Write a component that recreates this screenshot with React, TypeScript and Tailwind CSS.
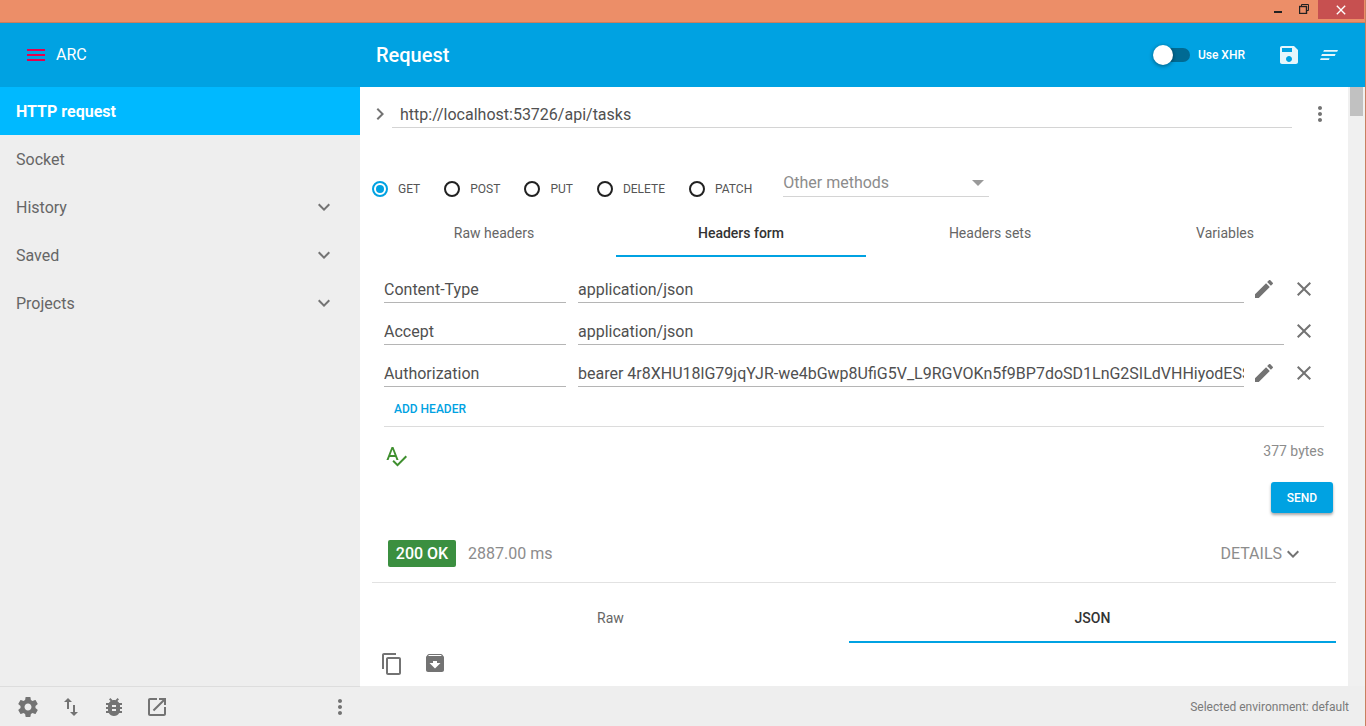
import React from "react";

const P = {
  save: "M17 3H5c-1.11 0-2 .9-2 2v14c0 1.1.89 2 2 2h14c1.1 0 2-.9 2-2V7l-4-4zm-5 16c-1.66 0-3-1.34-3-3s1.34-3 3-3 3 1.34 3 3-1.34 3-3 3zm3-10H5V5h10v4z",
  more: "M12 8c1.1 0 2-.9 2-2s-.9-2-2-2-2 .9-2 2 .9 2 2 2zm0 2c-1.1 0-2 .9-2 2s.9 2 2 2 2-.9 2-2-.9-2-2-2zm0 6c-1.1 0-2 .9-2 2s.9 2 2 2 2-.9 2-2-.9-2-2-2z",
  right: "M10 6L8.59 7.41 13.17 12l-4.58 4.59L10 18l6-6z",
  down: "M16.59 8.59L12 13.17 7.41 8.59 6 10l6 6 6-6z",
  edit: "M3 17.25V21h3.75L17.81 9.94l-3.75-3.75L3 17.25zM20.71 7.04c.39-.39.39-1.02 0-1.41l-2.34-2.34c-.39-.39-1.02-.39-1.41 0l-1.83 1.83 3.75 3.75 1.83-1.83z",
  close: "M19 6.41L17.59 5 12 10.59 6.41 5 5 6.41 10.59 12 5 17.59 6.41 19 12 13.41 17.59 19 19 17.59 13.41 12z",
  spell: "M12.45 16h2.09L9.43 3H7.57L2.46 16h2.09l1.12-3h5.64l1.14 3zm-6.02-5L8.5 5.48 10.57 11H6.43zm15.16.59l-8.09 8.09L9.83 16l-1.41 1.41 5.09 5.09L23 13l-1.41-1.41z",
  gear: "M19.43 12.98c.04-.32.07-.64.07-.98s-.03-.66-.07-.98l2.11-1.65c.19-.15.24-.42.12-.64l-2-3.46c-.12-.22-.39-.3-.61-.22l-2.49 1c-.52-.4-1.08-.73-1.69-.98l-.38-2.65C14.46 2.18 14.25 2 14 2h-4c-.25 0-.46.18-.49.42l-.38 2.65c-.61.25-1.17.59-1.69.98l-2.49-1c-.23-.09-.49 0-.61.22l-2 3.46c-.13.22-.07.49.12.64l2.11 1.65c-.04.32-.07.65-.07.98s.03.66.07.98l-2.11 1.65c-.19.15-.24.42-.12.64l2 3.46c.12.22.39.3.61.22l2.49-1c.52.4 1.08.73 1.69.98l.38 2.65c.03.24.24.42.49.42h4c.25 0 .46-.18.49-.42l.38-2.65c.61-.25 1.17-.59 1.69-.98l2.49 1c.23.09.49 0 .61-.22l2-3.46c.12-.22.07-.49-.12-.64l-2.11-1.65zM12 15.5c-1.93 0-3.5-1.57-3.5-3.5s1.57-3.5 3.5-3.5 3.5 1.57 3.5 3.5-1.57 3.5-3.5 3.5z",
  swap: "M16 17.01V10h-2v7.01h-3L15 21l4-3.99h-3zM9 3L5 6.99h3V14h2V6.99h3L9 3z",
  bug: "M20 8h-2.81c-.45-.78-1.07-1.45-1.82-1.96L17 4.41 15.59 3l-2.17 2.17C12.96 5.06 12.49 5 12 5c-.49 0-.96.06-1.41.17L8.41 3 7 4.41l1.62 1.63C7.88 6.55 7.26 7.22 6.81 8H4v2h2.09c-.05.33-.09.66-.09 1v1H4v2h2v1c0 .34.04.67.09 1H4v2h2.81c1.04 1.79 2.97 3 5.19 3s4.15-1.21 5.19-3H20v-2h-2.09c.05-.33.09-.66.09-1v-1h2v-2h-2v-1c0-.34-.04-.67-.09-1H20V8zm-6 8h-4v-2h4v2zm0-4h-4v-2h4v2z",
  open: "M19 19H5V5h7V3H5c-1.11 0-2 .9-2 2v14c0 1.1.89 2 2 2h14c1.1 0 2-.9 2-2v-7h-2v7zM14 3v2h3.59l-9.83 9.83 1.41 1.41L19 6.41V10h2V3h-7z",
  copy: "M16 1H4c-1.1 0-2 .9-2 2v14h2V3h12V1zm3 4H8c-1.1 0-2 .9-2 2v14c0 1.1.9 2 2 2h11c1.1 0 2-.9 2-2V7c0-1.1-.9-2-2-2zm0 16H8V7h11v14z",
  archive: "M20.54 5.23l-1.39-1.68C18.88 3.21 18.47 3 18 3H6c-.47 0-.88.21-1.16.55L3.46 5.23C3.17 5.57 3 6.02 3 6.5V19c0 1.1.9 2 2 2h14c1.1 0 2-.9 2-2V6.5c0-.48-.17-.93-.46-1.27zM12 17.5L6.5 12H10v-2h4v2h3.5L12 17.5zM5.12 5l.81-1h12l.94 1H5.12z",
};

function Icon({ d, className }: { d: string; className: string }) {
  return (
    <svg viewBox="0 0 24 24" className={className} fill="currentColor" aria-hidden="true">
      <path d={d} />
    </svg>
  );
}

function NavRow({ label, expand }: { label: string; expand?: boolean }) {
  return (
    <div className="h-12 flex items-center justify-between pl-4 pr-6 text-[16px] text-[#666666]">
      <span className="pt-[1px]">{label}</span>
      {expand && <Icon d={P.down} className="w-6 h-6 text-[#737373]" />}
    </div>
  );
}

function Radio({ label, checked }: { label: string; checked?: boolean }) {
  return (
    <div className="flex items-center gap-[10px]">
      {checked ? (
        <span className="w-4 h-4 rounded-full border-2 border-[#00a2e2] flex items-center justify-center">
          <span className="w-2 h-2 rounded-full bg-[#00a2e2]" />
        </span>
      ) : (
        <span className="w-4 h-4 rounded-full border-2 border-[#212121]" />
      )}
      <span className="text-[12px] text-[#555555]">{label}</span>
    </div>
  );
}

function Field({ text, widthClass }: { text: string; widthClass: string }) {
  return (
    <div className={`${widthClass} h-[28px] border-b border-[#b5b5b5] text-[16px] leading-[29px] text-[#505050] overflow-hidden whitespace-nowrap`}>
      {text}
    </div>
  );
}

function HeaderRow({ name, value, edit }: { name: string; value: string; edit?: boolean }) {
  return (
    <div className="h-[42px] w-[952px] flex items-center pl-3">
      <Field text={name} widthClass="w-[182px]" />
      <Field text={value} widthClass={edit ? "ml-3 w-[666px]" : "ml-3 w-[706px]"} />
      {edit && (
        <div className="w-10 flex justify-center">
          <Icon d={P.edit} className="w-6 h-6 text-[#737373]" />
        </div>
      )}
      <div className="w-10 flex justify-center">
        <Icon d={P.close} className="w-6 h-6 text-[#737373]" />
      </div>
    </div>
  );
}

export default function App() {
  return (
    <div className="w-full h-[726px] flex flex-col overflow-hidden border-r border-[#c9805f] bg-white font-['Roboto',sans-serif]">
      {/* window chrome */}
      <div className="h-[23px] shrink-0 bg-[#ec8e68] border-b border-[#c97d5e] flex justify-end items-start">
        <span className="w-2 h-[2px] mt-[11px] mr-[17px] bg-[#222222]" />
        <svg viewBox="0 0 10 10" className="w-[10px] h-[10px] mt-1 mr-[9px]" fill="none" stroke="#222222" strokeWidth="1">
          <path d="M2.5 2.5V.5h7v6h-2" />
          <rect x=".5" y="2.5" width="7" height="7" strokeWidth="1.4" />
        </svg>
        <div className="w-[46px] h-[19px] mr-[1px] bg-[#c75050] flex items-center justify-center">
          <Icon d={P.close} className="w-4 h-4 text-white" />
        </div>
      </div>

      {/* app header */}
      <div className="h-16 shrink-0 bg-[#00a2e2] flex text-white">
        <div className="w-[360px] flex items-center pl-[27px]">
          <svg viewBox="0 0 18 12" className="w-[18px] h-3 text-[#e6004d]" fill="currentColor" aria-hidden="true">
            <rect x="0" y="0" width="18" height="2" />
            <rect x="0" y="5" width="18" height="2" />
            <rect x="0" y="10" width="18" height="2" />
          </svg>
          <span className="ml-[11px] text-[16px]">ARC</span>
        </div>
        <div className="flex-1 flex items-center pl-4">
          <span className="text-[20px] font-medium">Request</span>
          <div className="ml-auto flex items-center">
            <div className="relative w-9 h-[14px] rounded-full bg-[#006a93]">
              <span className="absolute -left-[1px] -top-[3px] w-5 h-5 rounded-full bg-white shadow-[0_1px_4px_rgba(0,0,0,0.45)]" />
            </div>
            <span className="ml-2 text-[12px] font-medium">Use XHR</span>
            <Icon d={P.save} className="ml-8 w-6 h-6 text-[#e6f6fc]" />
            <svg viewBox="0 0 18 10" className="ml-[19px] mr-[27px] w-[18px] h-[10px]" fill="#e6f6fc" aria-hidden="true">
              <path d="M4 0H18l-.8 1.8H3.2zM2 4.1H15.6l-.8 1.8H1.2zM.8 8.2H9.6l-.6 1.8H0z" />
            </svg>
          </div>
        </div>
      </div>

      <div className="flex-1 min-h-0 flex">
        {/* sidebar */}
        <aside className="w-[360px] shrink-0 bg-[#eeeeee]">
          <div className="h-12 flex items-center pl-4 pt-[1px] bg-[#00b9ff] text-white text-[16px] font-bold">HTTP request</div>
          <NavRow label="Socket" />
          <NavRow label="History" expand />
          <NavRow label="Saved" expand />
          <NavRow label="Projects" expand />
        </aside>

        {/* main */}
        <main className="flex-1 min-w-0 overflow-hidden pl-3">
          {/* url row */}
          <div className="h-[54px] flex items-center">
            <Icon d={P.right} className="w-6 h-6 -ml-1 text-[#737373]" />
            <div className="w-[900px] h-[26px] mt-[2px] border-b border-[#d4d4d4] pl-2 text-[16px] leading-[26px] text-[#505050]">
              http://localhost:53726/api/tasks
            </div>
            <Icon d={P.more} className="ml-4 w-6 h-6 text-[#737373]" />
          </div>

          {/* methods */}
          <div className="mt-8 h-8 flex items-start">
            <div className="flex items-center gap-6 h-8">
              <Radio label="GET" checked />
              <Radio label="POST" />
              <Radio label="PUT" />
              <Radio label="DELETE" />
              <Radio label="PATCH" />
            </div>
            <div className="ml-[31px] w-[206px] h-[28px] -mt-1 border-b border-[#d4d4d4] flex items-center justify-between text-[16px] text-[#8c8c8c]">
              <span>Other methods</span>
              <svg viewBox="0 0 12 6" className="w-3 h-[6px] mr-[5px]" fill="#9a9a9a" aria-hidden="true">
                <path d="M0 0h12L6 6z" />
              </svg>
            </div>
          </div>

          {/* header tabs */}
          <div className="mt-1 h-12 w-[964px] flex text-[14px] text-[#666666]">
            <div className="w-[244px] flex items-center justify-center pt-[2px] border-b-2 border-transparent">Raw headers</div>
            <div className="w-[250px] flex items-center justify-center pt-[2px] border-b-2 border-[#00a2e2] font-medium text-[#333333]">Headers form</div>
            <div className="w-[248px] flex items-center justify-center pt-[2px] border-b-2 border-transparent">Headers sets</div>
            <div className="w-[222px] flex items-center justify-center pt-[2px] border-b-2 border-transparent">Variables</div>
          </div>

          {/* header form */}
          <div className="mt-[11px]">
            <HeaderRow name="Content-Type" value="application/json" edit />
            <HeaderRow name="Accept" value="application/json" />
            <HeaderRow name="Authorization" value="bearer 4r8XHU18lG79jqYJR-we4bGwp8UfiG5V_L9RGVOKn5f9BP7doSD1LnG2SILdVHHiyodESSxK2fXbvYjU8wQkPZh" edit />
          </div>

          <div className="ml-3 w-[940px] h-[33px] pb-[2px] flex items-center border-b border-[#dcdcdc]">
            <span className="ml-[10px] text-[12px] font-medium text-[#00a2e2]">ADD HEADER</span>
          </div>

          <div className="ml-3 w-[940px] h-[49px] flex items-center justify-between">
            <Icon d={P.spell} className="w-6 h-6 mt-2 text-[#3f8f2f]" />
            <span className="text-[14px] text-[#8c8c8c]">377 bytes</span>
          </div>

          <div className="w-[961px] flex justify-end mt-[6px]">
            <div className="w-[62px] h-[31px] rounded-[3px] bg-[#00a2e2] flex items-center justify-center text-[12px] font-medium text-white shadow-[0_2px_3px_rgba(0,0,0,0.35)]">
              SEND
            </div>
          </div>

          {/* status */}
          <div className="mt-3 w-[964px] h-[58px] border-b border-[#e2e2e2] flex items-center pl-4 pr-[31px]">
            <span className="w-[68px] h-[27px] rounded-[2px] bg-[#3b8f40] flex items-center justify-center text-[16px] font-medium text-white">200 OK</span>
            <span className="ml-3 text-[16px] text-[#8c8c8c]">2887.00 ms</span>
            <span className="ml-auto text-[16px] text-[#8c8c8c]">DETAILS</span>
            <Icon d={P.down} className="-ml-[1px] w-6 h-6 text-[#737373]" />
          </div>

          {/* response tabs */}
          <div className="w-[964px] h-[60px] flex text-[14px]">
            <div className="w-[477px] flex items-center justify-center pt-3 border-b-2 border-transparent text-[#666666]">Raw</div>
            <div className="w-[487px] flex items-center justify-center pt-3 border-b-2 border-[#00a2e2] font-medium text-[#333333]">JSON</div>
          </div>

          <div className="h-[42px] flex items-center">
            <Icon d={P.copy} className="ml-2 w-6 h-6 text-[#737373]" />
            <Icon d={P.archive} className="ml-[19px] -mt-[2px] w-6 h-6 text-[#737373]" />
          </div>
        </main>

        {/* scrollbar */}
        <div className="w-[17px] shrink-0 bg-[#f0f0f0] px-[2px]">
          <div className="h-[29px] bg-[#c1c1c1]" />
        </div>
      </div>

      {/* footer */}
      <div className="h-10 shrink-0 bg-[#eeeeee] flex">
        <div className="w-[360px] border-t border-[#dddddd] flex items-center text-[#737373]">
          <Icon d={P.gear} className="ml-4 w-6 h-6" />
          <Icon d={P.swap} className="ml-[19px] w-6 h-6" />
          <Icon d={P.bug} className="ml-[19px] w-6 h-6" />
          <Icon d={P.open} className="ml-[19px] w-6 h-6" />
          <Icon d={P.more} className="ml-[159px] w-6 h-6" />
        </div>
        <div className="flex-1 flex items-center justify-end pr-4 pt-[1px] text-[12px] text-[#7a7a7a]">
          Selected environment: default
        </div>
      </div>
    </div>
  );
}
